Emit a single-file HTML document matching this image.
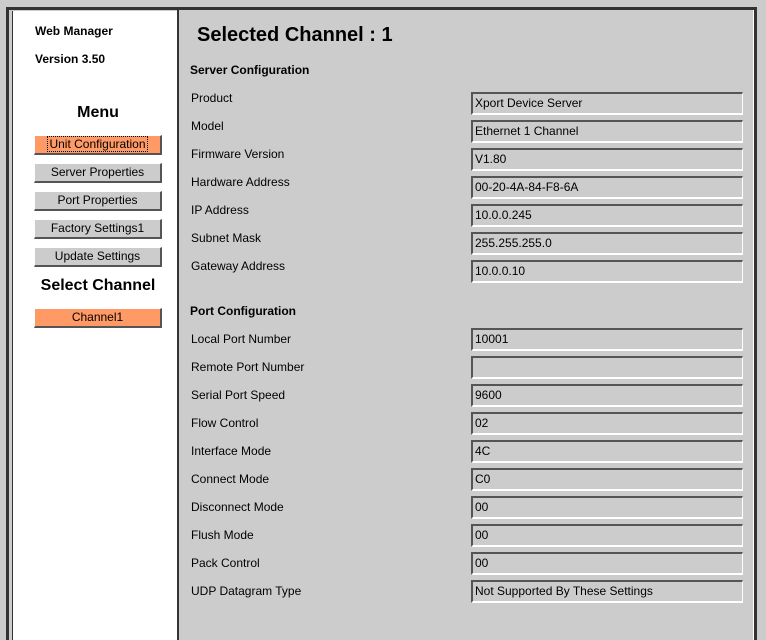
<!DOCTYPE html>
<html style="overflow:hidden"><head><meta charset="utf-8"><style>
html,body{overflow:hidden}
body{margin:0;width:766px;height:640px;background:#ccc;position:relative;overflow:hidden;font-family:"Liberation Sans",Arial,sans-serif;color:#000}
.a{position:absolute}
.frame{left:6px;top:7px;width:751px;height:640px;border-top:3px solid #333;border-left:3px solid #333;border-right:3px solid #333;box-sizing:border-box}
.side{left:12px;top:11px;width:165px;height:629px;background:#fff;border-left:1px solid #333}
.vline{left:177px;top:10px;width:2px;height:630px;background:#333}
.rw{left:753px;top:10px;width:1px;height:630px;background:#fff}
.btn{position:absolute;left:34px;width:128px;height:20px;background:#ccc;border-top:1px solid #fff;border-left:1px solid #fff;border-right:2px solid #555;border-bottom:2px solid #555;box-sizing:border-box;font-size:12px;text-align:center;line-height:17px}
.or{background:#ff9966}
.lbl{position:absolute;left:191px;font-size:12px}
.f{position:absolute;left:471px;width:272px;height:23px;box-sizing:border-box;border-top:2px solid #555;border-left:2px solid #555;border-right:1px solid #fff;border-bottom:2px solid #fff;font-size:12px;line-height:19px;padding-left:2px}
.h{position:absolute;left:190px;font-size:12px;font-weight:bold}
</style></head><body>
<div class="a frame"></div>
<div class="a side"></div>
<div class="a vline"></div>
<div class="a rw"></div>
<div class="a" style="left:35px;top:24px;font-size:12px;font-weight:bold">Web Manager</div>
<div class="a" style="left:35px;top:52px;font-size:12px;font-weight:bold">Version 3.50</div>
<div class="a" style="left:34px;top:104px;width:128px;text-align:center;font-size:16px;font-weight:bold">Menu</div>
<div class="btn or" style="top:135px"><span style="outline:1px dotted #000;padding:0 1px">Unit Configuration</span></div>
<div class="btn" style="top:163px">Server Properties</div>
<div class="btn" style="top:191px">Port Properties</div>
<div class="btn" style="top:219px">Factory Settings1</div>
<div class="btn" style="top:247px">Update Settings</div>
<div class="a" style="left:30px;top:277px;width:136px;text-align:center;font-size:16px;font-weight:bold">Select Channel</div>
<div class="btn or" style="top:308px">Channel1</div>
<div class="a" style="left:197px;top:24px;font-size:20px;font-weight:bold">Selected Channel : 1</div>
<div class="h" style="top:63px">Server Configuration</div>
<div class="lbl" style="top:91px">Product</div><div class="f" style="top:92px">Xport Device Server</div>
<div class="lbl" style="top:119px">Model</div><div class="f" style="top:120px">Ethernet 1 Channel</div>
<div class="lbl" style="top:147px">Firmware Version</div><div class="f" style="top:148px">V1.80</div>
<div class="lbl" style="top:175px">Hardware Address</div><div class="f" style="top:176px">00-20-4A-84-F8-6A</div>
<div class="lbl" style="top:203px">IP Address</div><div class="f" style="top:204px">10.0.0.245</div>
<div class="lbl" style="top:231px">Subnet Mask</div><div class="f" style="top:232px">255.255.255.0</div>
<div class="lbl" style="top:259px">Gateway Address</div><div class="f" style="top:260px">10.0.0.10</div>
<div class="h" style="top:304px">Port Configuration</div>
<div class="lbl" style="top:332px">Local Port Number</div><div class="f" style="top:328px">10001</div>
<div class="lbl" style="top:360px">Remote Port Number</div><div class="f" style="top:356px"></div>
<div class="lbl" style="top:388px">Serial Port Speed</div><div class="f" style="top:384px">9600</div>
<div class="lbl" style="top:416px">Flow Control</div><div class="f" style="top:412px">02</div>
<div class="lbl" style="top:444px">Interface Mode</div><div class="f" style="top:440px">4C</div>
<div class="lbl" style="top:472px">Connect Mode</div><div class="f" style="top:468px">C0</div>
<div class="lbl" style="top:500px">Disconnect Mode</div><div class="f" style="top:496px">00</div>
<div class="lbl" style="top:528px">Flush Mode</div><div class="f" style="top:524px">00</div>
<div class="lbl" style="top:556px">Pack Control</div><div class="f" style="top:552px">00</div>
<div class="lbl" style="top:584px">UDP Datagram Type</div><div class="f" style="top:580px">Not Supported By These Settings</div>
</body></html>
